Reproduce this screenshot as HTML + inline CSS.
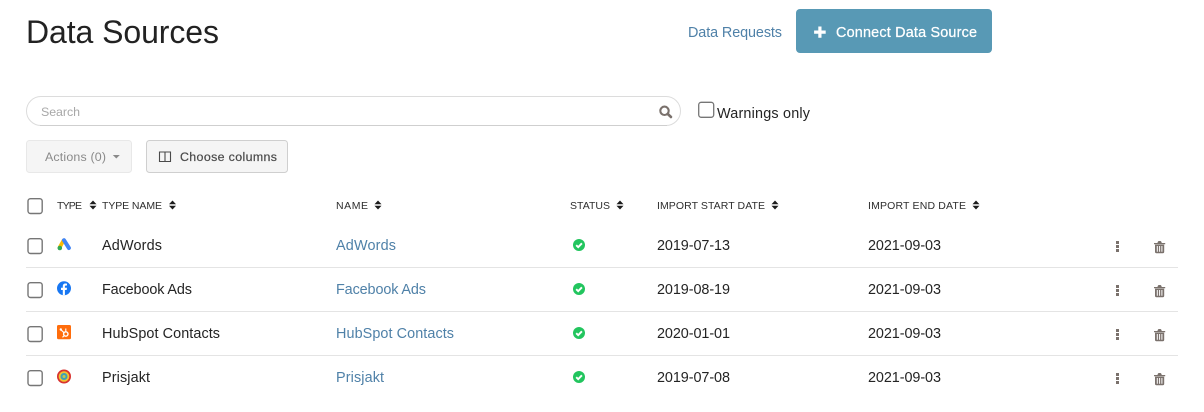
<!DOCTYPE html>
<html lang="en">
<head>
<meta charset="utf-8">
<title>Data Sources</title>
<style>
html,body{margin:0;padding:0;background:#fff;width:1204px;height:412px;overflow:hidden}
svg{display:block}
text{font-family:"Liberation Sans",sans-serif;font-size:14.4px;fill:#242424}
.l{fill:#4f81a8}
.h{font-size:10.500px;fill:#2e2e2e}
</style>
</head>
<body>
<svg width="1204" height="412" viewBox="0 0 1204 412" xmlns="http://www.w3.org/2000/svg">
<defs>
<g id="cb"><rect x=".7" y=".7" width="14.2" height="14.800" rx="2.500" fill="#fff" stroke="#767676" stroke-width="1.400"/></g>
<g id="sort" fill="#1c1c1c"><path d="M0 3.800 L3.500 0 L7 3.800Z"/><path d="M0 5.200 L3.500 9 L7 5.200Z"/></g>
<g id="ok"><circle cx="6" cy="6" r="6" fill="#22c55e"/><path d="M3.200 6.200 L5.200 8.200 L8.900 4.300" fill="none" stroke="#fff" stroke-width="1.900"/></g>
<g id="kebab" fill="#7a716c"><rect x="0" y="0" width="3" height="3"/><rect x="0" y="4" width="3" height="3"/><rect x="0" y="8" width="3" height="3"/></g>
<g id="trash" fill="#7a716c"><path d="M0 2h3.400l.6-1.500Q4.300 0 5 0h1.200q.7 0 1 .5L7.800 2H11.200v1.200H0Z"/><path fill-rule="evenodd" d="M1 3.600h9.200V11q0 1.200-1.200 1.200H2.200Q1 12.200 1 11ZM2.800 5v5.800h1V5ZM5.100 5v5.800h1V5ZM7.400 5v5.800h1V5Z"/></g>
</defs>

<text x="26" y="43" style="font-size:32px;fill:#222" textLength="193" lengthAdjust="spacing">Data Sources</text>
<text x="688" y="37" class="l" textLength="94" lengthAdjust="spacing">Data Requests</text>

<rect x="796" y="9" width="196" height="44" rx="4" fill="#5899b5"/>
<path d="M818.300 26.500h3.200v4h4.200v3.200h-4.200v4h-3.200v-4h-4.200v-3.200h4.200Z" fill="#fff"/>
<text x="836" y="37" style="fill:#fff;stroke:#fff;stroke-width:.25px" textLength="141" lengthAdjust="spacing">Connect Data Source</text>

<rect x="26.500" y="96.500" width="654" height="29" rx="14.500" fill="#fff" stroke="#dcdcdc"/>
<path d="M40 125.500H667" stroke="#cfcfcf" fill="none"/>
<text x="41" y="116" style="font-size:12.400px;fill:#a8a8a8" textLength="39" lengthAdjust="spacing">Search</text>
<circle cx="664.500" cy="110.800" r="4.200" fill="none" stroke="#7a716c" stroke-width="2.100"/>
<path d="M667.800 114L671 117" stroke="#7a716c" stroke-width="2.600" stroke-linecap="round"/>
<rect x="698.700" y="102.300" width="15" height="15" rx="2.500" fill="#fff" stroke="#767676" stroke-width="1.300"/>
<text x="717" y="118" textLength="93" lengthAdjust="spacing">Warnings only</text>

<rect x="26.500" y="140.500" width="105" height="32" rx="3" fill="#f5f5f5" stroke="#e8e8e8"/>
<text x="45" y="161" style="font-size:12.400px;fill:#8a8a8a" textLength="61" lengthAdjust="spacing">Actions (0)</text>
<path d="M112.800 155h7l-3.500 3.500Z" fill="#8a8a8a"/>
<rect x="146.500" y="140.500" width="141" height="32" rx="3" fill="#f5f5f5" stroke="#cfcfcf"/>
<path d="M159.500 152h11v9.500h-11ZM165 152v9.500" fill="none" stroke="#4a4a4a" stroke-width="1.100"/>
<text x="180" y="161" style="font-size:12.400px;fill:#4a4a4a;stroke:#4a4a4a;stroke-width:.2px" textLength="97" lengthAdjust="spacing">Choose columns</text>

<use href="#cb" x="27.300" y="198"/>
<text x="57" y="209" class="h" textLength="25" lengthAdjust="spacing">TYPE</text>
<use href="#sort" x="89.500" y="200.500"/>
<text x="102" y="209" class="h" textLength="60" lengthAdjust="spacing">TYPE NAME</text>
<use href="#sort" x="169" y="200.500"/>
<text x="336" y="209" class="h" textLength="32" lengthAdjust="spacing">NAME</text>
<use href="#sort" x="374.500" y="200.500"/>
<text x="570" y="209" class="h" textLength="40" lengthAdjust="spacing">STATUS</text>
<use href="#sort" x="616.500" y="200.500"/>
<text x="657" y="209" class="h" textLength="108" lengthAdjust="spacing">IMPORT START DATE</text>
<use href="#sort" x="771.500" y="200.500"/>
<text x="868" y="209" class="h" textLength="98" lengthAdjust="spacing">IMPORT END DATE</text>
<use href="#sort" x="972.500" y="200.500"/>

<path d="M26 267.500H1178M26 311.500H1178M26 355.500H1178" stroke="#e4e4e4" fill="none"/>

<!-- Row 1 -->
<use href="#cb" x="27.300" y="238"/>
<path d="M63.800 240L59.600 247.500" stroke="#fbbc04" stroke-width="3.800"/>
<path d="M64 240.200 L68.900 248" stroke="#4285f4" stroke-width="4" stroke-linecap="round"/>
<circle cx="59.800" cy="248" r="2.300" fill="#34a853"/>
<text x="102" y="250" textLength="60" lengthAdjust="spacing">AdWords</text>
<text x="336" y="250" class="l" textLength="60" lengthAdjust="spacing">AdWords</text>
<use href="#ok" x="573" y="239"/>
<text x="657" y="250" textLength="73" lengthAdjust="spacing">2019-07-13</text>
<text x="868" y="250" textLength="73" lengthAdjust="spacing">2021-09-03</text>
<use href="#kebab" x="1116" y="241"/>
<use href="#trash" x="1154" y="241"/>

<!-- Row 2 -->
<use href="#cb" x="27.300" y="282"/>
<circle cx="64" cy="288.300" r="7" fill="#1877f2"/>
<path d="M62.800 295.300v-5.300h-1.800v-2.200h1.800v-1.500c0-1.900 1.100-2.800 2.700-2.800l1.500.1v1.900h-1c-.9 0-1.100.4-1.100 1.100v1.200h2.100l-.3 2.200h-1.800v5.300Z" fill="#fff"/>
<text x="102" y="294" textLength="90" lengthAdjust="spacing">Facebook Ads</text>
<text x="336" y="294" class="l" textLength="90" lengthAdjust="spacing">Facebook Ads</text>
<use href="#ok" x="573" y="283"/>
<text x="657" y="294" textLength="73" lengthAdjust="spacing">2019-08-19</text>
<text x="868" y="294" textLength="73" lengthAdjust="spacing">2021-09-03</text>
<use href="#kebab" x="1116" y="285"/>
<use href="#trash" x="1154" y="285"/>

<!-- Row 3 -->
<use href="#cb" x="27.300" y="326"/>
<rect x="57" y="325" width="14" height="14.300" rx="1.500" fill="#ff6d0c"/>
<circle cx="65.800" cy="334" r="2.200" fill="none" stroke="#fff" stroke-width="1.400"/>
<path d="M65.800 331.500V328.500M64 332.700L61 329.800M64 335.800L62.500 337.300" stroke="#fff" stroke-width="1.100" fill="none"/>
<circle cx="60.800" cy="329.500" r="1.200" fill="#fff"/>
<text x="102" y="338" textLength="118" lengthAdjust="spacing">HubSpot Contacts</text>
<text x="336" y="338" class="l" textLength="118" lengthAdjust="spacing">HubSpot Contacts</text>
<use href="#ok" x="573" y="327"/>
<text x="657" y="338" textLength="73" lengthAdjust="spacing">2020-01-01</text>
<text x="868" y="338" textLength="73" lengthAdjust="spacing">2021-09-03</text>
<use href="#kebab" x="1116" y="329"/>
<use href="#trash" x="1154" y="329"/>

<!-- Row 4 -->
<use href="#cb" x="27.300" y="370"/>
<circle cx="64" cy="376.500" r="7" fill="#d8322f"/>
<circle cx="64" cy="376.500" r="5.300" fill="#f2c230"/>
<circle cx="64" cy="376.500" r="3.500" fill="#3fa0b8"/>
<circle cx="64" cy="376.500" r="1.500" fill="#c5c84a"/>
<text x="102" y="382" textLength="48" lengthAdjust="spacing">Prisjakt</text>
<text x="336" y="382" class="l" textLength="48" lengthAdjust="spacing">Prisjakt</text>
<use href="#ok" x="573" y="371"/>
<text x="657" y="382" textLength="73" lengthAdjust="spacing">2019-07-08</text>
<text x="868" y="382" textLength="73" lengthAdjust="spacing">2021-09-03</text>
<use href="#kebab" x="1116" y="373"/>
<use href="#trash" x="1154" y="373"/>
</svg>
</body>
</html>
